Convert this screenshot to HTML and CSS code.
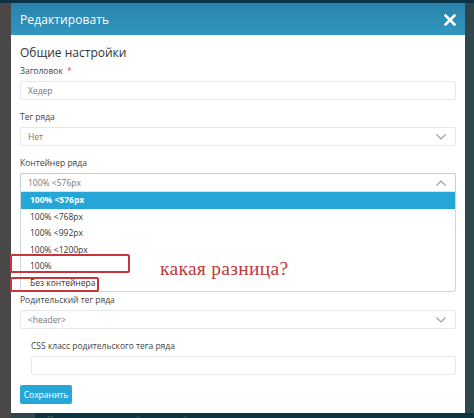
FILE: index.html
```html
<!DOCTYPE html>
<html lang="ru">
<head>
<meta charset="utf-8">
<title>Редактировать</title>
<link rel="stylesheet" href="styles.css">
</head>
<body>
<div class="screen">
  <div class="topbar"></div>
  <div class="modal">
    <div class="modal-header">
      <span class="title">Редактировать</span>
      <svg class="close" width="12" height="12" viewBox="0 0 12 12"><path d="M1.5 1.5L10.5 10.5M10.5 1.5L1.5 10.5" stroke="#fff" stroke-width="2.6" stroke-linecap="round"/></svg>
    </div>
    <div class="modal-body">
      <h3 class="section">Общие настройки</h3>
      <div class="field">
        <div class="label">Заголовок <span class="req">*</span></div>
        <div class="control placeholder">Хедер</div>
      </div>
      <div class="field">
        <div class="label">Тег ряда</div>
        <div class="control select">Нет
          <svg class="chev" width="10" height="6" viewBox="0 0 10 6"><path d="M0.5 0.5L5 5L9.5 0.5" fill="none" stroke="#9a9a9a" stroke-width="1.1"/></svg>
        </div>
      </div>
      <div class="field field-open">
        <div class="label">Контейнер ряда</div>
        <div class="control select open">100% &lt;576px
          <svg class="chev" width="10" height="6" viewBox="0 0 10 6"><path d="M0.5 5.5L5 1L9.5 5.5" fill="none" stroke="#9a9a9a" stroke-width="1.1"/></svg>
        </div>
        <ul class="options">
          <li class="active">100% &lt;576px</li>
          <li>100% &lt;768px</li>
          <li>100% &lt;992px</li>
          <li>100% &lt;1200px</li>
          <li>100%</li>
          <li>Без контейнера</li>
        </ul>
      </div>
      <div class="field">
        <div class="label">Родительский тег ряда</div>
        <div class="control select">&lt;header&gt;
          <svg class="chev" width="10" height="6" viewBox="0 0 10 6"><path d="M0.5 0.5L5 5L9.5 0.5" fill="none" stroke="#9a9a9a" stroke-width="1.1"/></svg>
        </div>
      </div>
      <div class="field nested">
        <div class="label">CSS класс родительского тега ряда</div>
        <div class="control"></div>
      </div>
      <button class="btn">Сохранить</button>
    </div>
  </div>
  <div class="under"><span>Позиции из всех шаблонов шаблона</span></div>
</div>
<div class="mark mark-1"></div>
<div class="mark mark-2"></div>
<div class="note">какая разница?</div>
</body>
</html>
```
FILE: styles.css
```css
* { box-sizing: border-box; margin: 0; padding: 0; }
html, body { width: 474px; height: 418px; overflow: hidden; }
body {
  position: relative;
  font-family: "Open Sans", "DejaVu Sans", sans-serif;
  background: linear-gradient(to right, #4a4847 0 11px, #2f474c 11px);
}
.screen { display: flex; flex-direction: column; }
.topbar { height: 3px; background: #0b3247; }
.modal {
  margin-left: 11px;
  width: 454px;
  background: #fff;
}
.modal-header {
  height: 32px;
  background: linear-gradient(#2883ab, #3196bf);
  display: flex;
  align-items: center;
  justify-content: space-between;
  padding: 0 9px 0 9px;
}
.title { color: #fff; font-size: 12px; letter-spacing: 0.1px; }
.close { margin-top: 1px; margin-right: 0; }
.modal-body { padding: 11px 9px 9px 9px; }
.section { font-size: 12px; font-weight: normal; color: #333; line-height: 14px; margin-bottom: 4px; }
.field { margin-bottom: 10px; }
.label { font-size: 8.5px; line-height: 13px; color: #444; margin-bottom: 4px; }
.req { color: #d9534f; margin-left: 2px; }
.control {
  position: relative;
  height: 19px;
  border: 1px solid #e6e9ec;
  border-radius: 2px;
  font-size: 8.5px;
  color: #777;
  padding-left: 7px;
  line-height: 17px;
}
.chev { position: absolute; right: 9px; top: 6px; }
.control.open { border-color: #b9d3e3; border-bottom-color: #d7e3ea; border-radius: 2px 2px 0 0; }
.field-open { margin-bottom: 1px; }
.options {
  list-style: none;
  border: 1px solid #c9d9e3;
  border-top: none;
  border-radius: 0 0 3px 3px;
}
.options li {
  height: 16.5px;
  line-height: 16.5px;
  padding-left: 9px;
  font-size: 8.5px;
  color: #333;
}
.options li.active { background: #26a5d7; color: #fff; font-weight: bold; }
.nested { padding-left: 11px; margin-bottom: 10px; }
.btn {
  display: block;
  height: 19px;
  width: 52px;
  border: none;
  border-radius: 2px;
  background: #29a6d8;
  color: #fff;
  font-family: "Open Sans", sans-serif;
  font-size: 8.5px;
}
.under {
  margin-left: 35px;
  height: 8px;
  background: #0c3540;
  overflow: hidden;
  padding-left: 12px;
}
.under span { display: block; font-size: 9px; line-height: 9px; color: #3f5d66; margin-top: 2px; }
.mark {
  position: absolute;
  border: 2px solid #c9353a;
  border-radius: 2px;
}
.mark-1 { left: 10px; top: 254px; width: 120px; height: 19px; }
.mark-2 { left: 10px; top: 277px; width: 89px; height: 15px; }
.note {
  position: absolute;
  left: 160px;
  top: 258px;
  font-family: "Liberation Serif", serif;
  font-size: 19.5px;
  color: #c0393b;
  letter-spacing: 0.3px;
}
```
